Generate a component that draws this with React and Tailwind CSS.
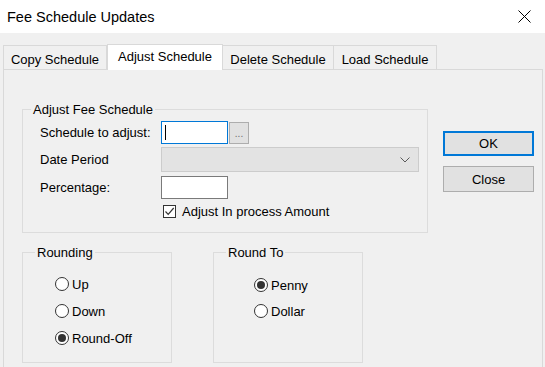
export default function App() {
  const radio = (label, checked) => (
    <div className="flex items-center h-[20px]">
      <div className="w-[14px] h-[14px] rounded-full border border-[#333333] bg-white flex items-center justify-center">
        {checked && <div className="w-[8px] h-[8px] rounded-full bg-[#333333]" />}
      </div>
      <span className="ml-[3px]">{label}</span>
    </div>
  );

  return (
    <div className="w-[545px] h-[367px] overflow-hidden bg-[#f0f0f0] text-[13px] leading-[15px] text-black font-['Liberation_Sans',Arial,sans-serif]">
      {/* Title bar */}
      <div className="h-[33px] bg-white flex items-center justify-between pl-[7px] pr-[14px]">
        <span className="text-[14.5px] leading-[18px]">Fee Schedule Updates</span>
        <svg width="13" height="13" viewBox="0 0 13 13">
          <path d="M0.5 0.5 L12.5 12.5 M12.5 0.5 L0.5 12.5" stroke="#000" strokeWidth="1" />
        </svg>
      </div>

      <div className="pt-[11px]">
        {/* Tab strip */}
        <div className="flex items-end pl-[3px] h-[25px]">
          <div className="w-[104px] h-[24px] border border-b-0 border-[#d9d9d9] bg-[#f0f0f0] flex items-center justify-center pt-[3px]">
            Copy Schedule
          </div>
          <div className="relative z-10 -mb-px w-[116px] h-[26px] border border-b-0 border-[#d9d9d9] bg-white flex items-center justify-center pb-[2px]">
            Adjust Schedule
          </div>
          <div className="w-[111px] h-[24px] border border-b-0 border-l-0 border-[#d9d9d9] bg-[#f0f0f0] flex items-center justify-center pt-[3px]">
            Delete Schedule
          </div>
          <div className="w-[103px] h-[24px] border border-b-0 border-l-0 border-[#d9d9d9] bg-[#f0f0f0] flex items-center justify-center pt-[3px]">
            Load Schedule
          </div>
        </div>

        {/* Panel */}
        <div className="ml-[3px] w-[540px] h-[320px] border border-[#d9d9d9] bg-[#f0f0f0]">
          <div className="flex items-start pl-[18px] pt-[32px]">
            <fieldset className="w-[406px] h-[131px] border border-[#dcdcdc]">
              <legend className="ml-[8px] px-[2px] leading-[15px]">Adjust Fee Schedule</legend>
              <div className="flex items-center h-[23px] mt-[4px]">
                <div className="w-[138px] pl-[17px]">Schedule to adjust:</div>
                <div className="w-[67px] h-[23px] border border-[#0078d7] bg-white flex items-center">
                  <div className="ml-[3px] w-px h-[15px] bg-black" />
                </div>
                <div className="ml-px w-[20px] h-[22px] bg-[#e1e1e1] border border-[#adadad] flex items-end justify-center pb-[4px] text-[10px] leading-[10px] text-[#6d6d6d]">
                  ...
                </div>
              </div>
              <div className="flex items-center h-[25px] mt-[3px]">
                <div className="w-[138px] pl-[17px]">Date Period</div>
                <div className="w-[258px] h-[25px] border border-[#cccccc] bg-[#e3e3e3] flex items-center justify-end pr-[8px]">
                  <svg width="10" height="6" viewBox="0 0 10 6">
                    <path d="M0.5 0.5 L5 5 L9.5 0.5" stroke="#5a5a5a" strokeWidth="1" fill="none" />
                  </svg>
                </div>
              </div>
              <div className="flex items-center h-[23px] mt-[4px]">
                <div className="w-[138px] pl-[17px]">Percentage:</div>
                <div className="w-[67px] h-[23px] border border-[#7a7a7a] bg-white" />
              </div>
              <div className="flex items-center h-[17px] mt-[4px] pl-[140px]">
                <div className="w-[13px] h-[13px] border border-[#333333] bg-white flex items-center justify-center">
                  <svg width="11" height="11" viewBox="0 0 11 11">
                    <path d="M1.5 5.5 L4.2 8.3 L9.7 2" stroke="#333" strokeWidth="1.2" fill="none" />
                  </svg>
                </div>
                <span className="ml-[6px]">Adjust In process Amount</span>
              </div>
            </fieldset>

            <div className="ml-[15px] mt-[29px] flex flex-col">
              <div className="w-[91px] h-[25px] border-2 border-[#0078d7] bg-[#e1e1e1] flex items-center justify-center">
                OK
              </div>
              <div className="mt-[10px] w-[91px] h-[26px] border border-[#adadad] bg-[#e1e1e1] flex items-center justify-center">
                Close
              </div>
            </div>
          </div>

          <div className="flex items-start pl-[18px] mt-[12px]">
            <fieldset className="w-[150px] h-[118px] border border-[#dcdcdc]">
              <legend className="ml-[12px] px-[2px] leading-[15px]">Rounding</legend>
              <div className="flex flex-col gap-[7px] pl-[32px] mt-[14px]">
                {radio("Up", false)}
                {radio("Down", false)}
                {radio("Round-Off", true)}
              </div>
            </fieldset>
            <fieldset className="ml-[41px] w-[150px] h-[118px] border border-[#dcdcdc]">
              <legend className="ml-[12px] px-[2px] leading-[15px]">Round To</legend>
              <div className="flex flex-col gap-[6px] pl-[40px] mt-[15px]">
                {radio("Penny", true)}
                {radio("Dollar", false)}
              </div>
            </fieldset>
          </div>
        </div>
      </div>
    </div>
  );
}
